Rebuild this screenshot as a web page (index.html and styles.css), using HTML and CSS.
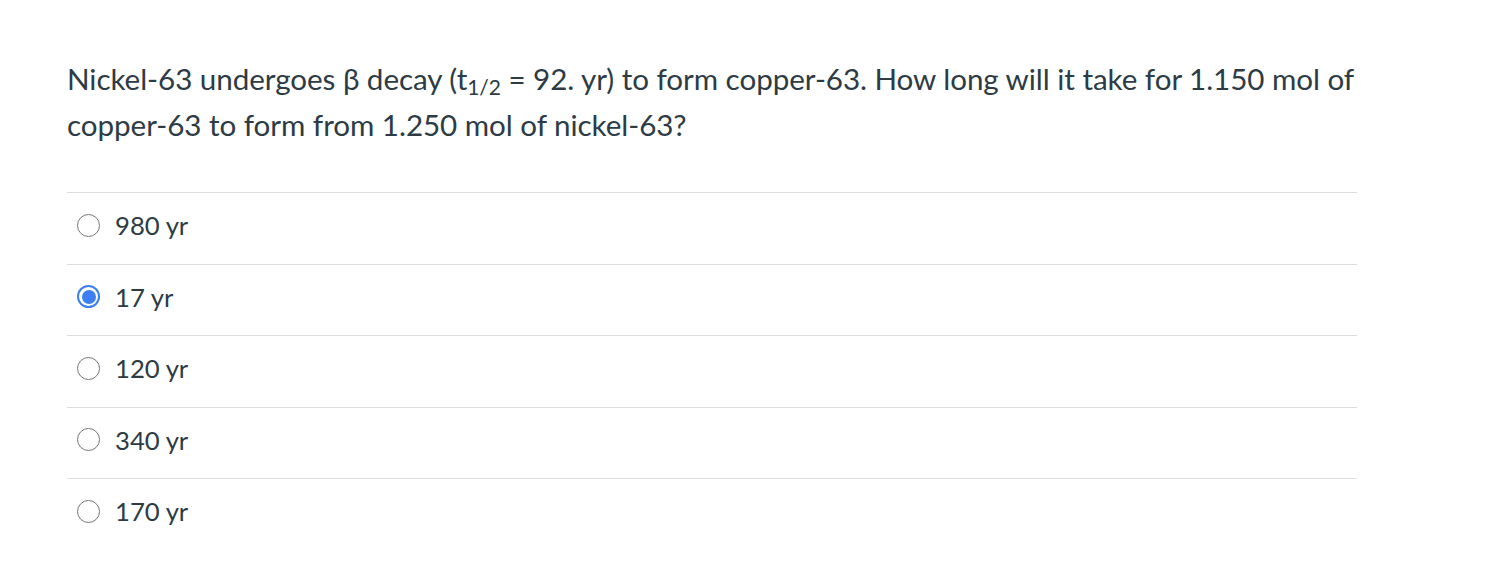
FILE: index.html
```html
<!DOCTYPE html>
<html>
<head>
<meta charset="utf-8">
<link rel="stylesheet" href="styles.css">
</head>
<body>
<div class="question">
  <p class="stem">Nickel-63 undergoes β decay (t<sub>1/2</sub> = 92. yr) to form copper-63. How long will it take for 1.150 mol of copper-63 to form from 1.250 mol of nickel-63?</p>
  <ul class="answers">
    <li class="answer"><span class="radio"></span><span class="label">980 yr</span></li>
    <li class="answer"><span class="radio checked"></span><span class="label">17 yr</span></li>
    <li class="answer"><span class="radio"></span><span class="label">120 yr</span></li>
    <li class="answer"><span class="radio"></span><span class="label">340 yr</span></li>
    <li class="answer"><span class="radio"></span><span class="label">170 yr</span></li>
  </ul>
</div>
</body>
</html>
```
FILE: styles.css
```css
html, body {
  margin: 0;
  padding: 0;
  background: #ffffff;
}
body {
  font-family: Lato, "Open Sans", sans-serif;
  color: #2d3b45;
}
.question {
  width: 1290px;
  padding: 56px 0 0 67px;
}
.stem {
  margin: 0;
  font-size: 29.6px;
  line-height: 46px;
  padding-bottom: 44px;
  letter-spacing: -0.05px;
}
.stem sub {
  font-size: 21px;
  line-height: 0;
  vertical-align: -5px;
}
.answers {
  list-style: none;
  margin: 0;
  padding: 0;
}
.answer {
  display: flex;
  align-items: center;
  height: 71.5px;
  box-sizing: border-box;
  border-top: 1.5px solid #dedede;
  padding-left: 10px;
  padding-bottom: 6px;
}
.radio {
  width: 23px;
  height: 23px;
  border: 1.5px solid #777777;
  border-radius: 50%;
  box-sizing: border-box;
  margin-right: 15px;
  flex: none;
}
.radio.checked {
  border: 2px solid #3b7ff2;
  position: relative;
}
.radio.checked::after {
  content: "";
  position: absolute;
  left: 2.5px;
  top: 2.5px;
  width: 14px;
  height: 14px;
  border-radius: 50%;
  background: #3b7ff2;
}
.label {
  font-size: 25.7px;
}
```
